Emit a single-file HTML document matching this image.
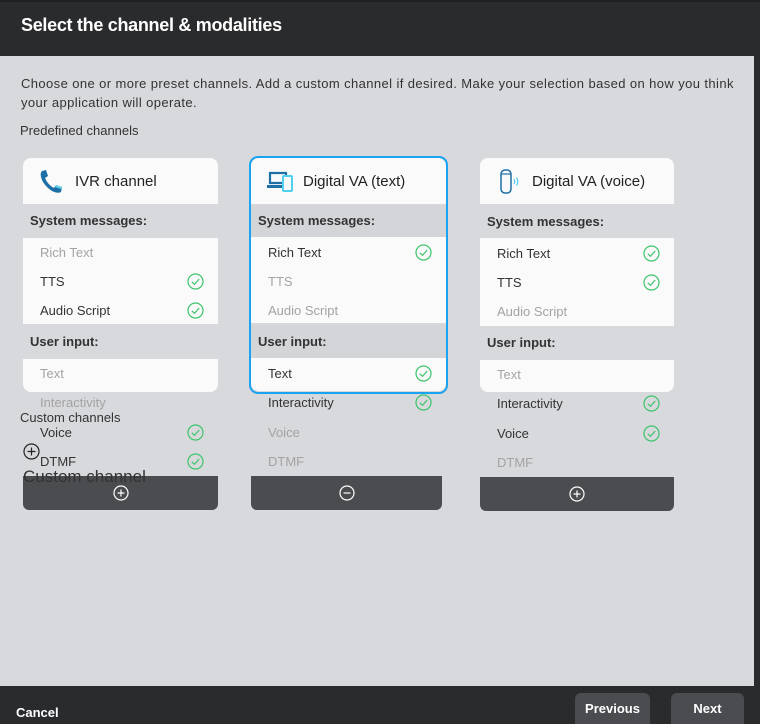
<!DOCTYPE html>
<html><head><meta charset="utf-8"><style>
*{margin:0;padding:0;box-sizing:border-box}
body{width:760px;height:724px;background:#2a2b2d;font-family:"Liberation Sans",sans-serif;position:relative;overflow:hidden}
.a{position:absolute}
.hdr{left:0;top:0;width:760px;height:56px;background:#2a2b2d;border-top:2px solid #1e1f21}
.title{left:21px;top:15px;color:#fff;font-size:18px;font-weight:bold;letter-spacing:-0.3px}
.body{left:0;top:56px;width:754px;height:630px;background:#d8d9dd}
.desc{left:21px;top:74px;width:730px;font-size:13px;line-height:19px;color:#333;white-space:nowrap;letter-spacing:0.4px}
.t{font-size:13px;color:#333;line-height:16px}
.card{position:absolute;top:158px}
.card .h{position:absolute;left:0;top:0;height:46px;width:100%;background:#fafafa;border-radius:8px 8px 0 0}
.card .h span{position:absolute;left:52px;top:15px;font-size:15px;color:#222;font-weight:500}
.card .w1{position:absolute;left:0;top:80px;height:86px;width:100%;background:#fafafa}
.card .w2{position:absolute;left:0;top:201px;height:33px;width:100%;background:#fafafa;border-radius:0 0 8px 8px}
.lab{position:absolute;left:7px;font-size:13px;font-weight:bold;color:#333;margin-top:1px}
.row{position:absolute;left:17px;font-size:13px;color:#333;margin-top:1px}
.row.off{color:#a3a3a3}
.ck{position:absolute;right:14px;width:17px;height:17px}
.btn{position:absolute;left:0;top:318px;height:34px;width:100%;background:#4a4c50;border-radius:0 0 6px 6px}
.btn svg{position:absolute;left:50%;top:9px;margin-left:-8px}
.foot{color:#fff;font-size:13px;font-weight:bold}
.fb{background:#4a4c50;border-radius:6px 6px 0 0;color:#fff;font-size:13px;font-weight:bold;text-align:center}
</style></head><body>
<div class="a hdr"></div>
<div class="a title">Select the channel &amp; modalities</div>
<div class="a body"></div>
<div class="a desc">Choose one or more preset channels. Add a custom channel if desired. Make your selection based on how you think<br>your application will operate.</div>
<div class="a t" style="left:20px;top:123px">Predefined channels</div>

<!-- IVR -->
<div class="card" style="left:23px;width:195px;height:360px">
<div class="h"><svg class="a" style="left:14px;top:10px" width="28" height="28" viewBox="0 0 28 28"><path d="M5 3 L9 2 L11 8 L8 10 Q11 17 17 20 L19 17 L25 19 L24 24 Q21 26 15 23 Q6 17 4 9 Q3 5 5 3Z" fill="#1d6fa6"/><path d="M19 17 L25 19 L24 21 L18 19Z" fill="#5fd3f0"/></svg><span>IVR channel</span></div>
<div class="lab" style="top:54px">System messages:</div>
<div class="w1"></div>
<div class="row off" style="top:86px">Rich Text</div>
<div class="row" style="top:115px">TTS</div>
<svg class="ck" style="top:115px" viewBox="0 0 17 17"><circle cx="8.5" cy="8.5" r="7.5" fill="none" stroke="#3cc46a" stroke-width="1.2"/><path d="M4.8 8.8 L7.5 11.3 L12.2 6" fill="none" stroke="#3cc46a" stroke-width="1.2"/></svg>
<div class="row" style="top:144px">Audio Script</div>
<svg class="ck" style="top:144px" viewBox="0 0 17 17"><circle cx="8.5" cy="8.5" r="7.5" fill="none" stroke="#3cc46a" stroke-width="1.2"/><path d="M4.8 8.8 L7.5 11.3 L12.2 6" fill="none" stroke="#3cc46a" stroke-width="1.2"/></svg>
<div class="lab" style="top:175px">User input:</div>
<div class="w2"></div>
<div class="row off" style="top:207px">Text</div>
<div class="row off" style="top:236px">Interactivity</div>
<div class="row" style="top:266px">Voice</div>
<svg class="ck" style="top:266px" viewBox="0 0 17 17"><circle cx="8.5" cy="8.5" r="7.5" fill="none" stroke="#3cc46a" stroke-width="1.2"/><path d="M4.8 8.8 L7.5 11.3 L12.2 6" fill="none" stroke="#3cc46a" stroke-width="1.2"/></svg>
<div class="row" style="top:295px">DTMF</div>
<svg class="ck" style="top:295px" viewBox="0 0 17 17"><circle cx="8.5" cy="8.5" r="7.5" fill="none" stroke="#3cc46a" stroke-width="1.2"/><path d="M4.8 8.8 L7.5 11.3 L12.2 6" fill="none" stroke="#3cc46a" stroke-width="1.2"/></svg>
<div class="btn"><svg width="16" height="16" viewBox="0 0 16 16"><circle cx="8" cy="8" r="7" fill="none" stroke="#fff" stroke-width="1.2"/><path d="M4.5 8H11.5M8 4.5V11.5" stroke="#fff" stroke-width="1.2"/></svg></div>
</div>
<div class="a t" style="left:20px;top:410px">Custom channels</div>
<svg class="a" style="left:23px;top:443px" width="17" height="17" viewBox="0 0 17 17"><circle cx="8.5" cy="8.5" r="7.5" fill="none" stroke="#222" stroke-width="1.2"/><path d="M4.5 8.5H12.5M8.5 4.5V12.5" stroke="#222" stroke-width="1.2"/></svg>
<div class="a" style="left:23px;top:467px;font-size:17px;color:#333">Custom channel</div>

<!-- Digital text -->
<div class="a" style="left:249px;top:156px;width:199px;height:238px;border:2px solid #1aa3f0;border-radius:9px;z-index:2"></div>
<div class="card" style="left:251px;width:195px;height:360px">
<div class="h"><svg class="a" style="left:16px;top:12px" width="28" height="24" viewBox="0 0 28 24"><path d="M3 3H19V13H3Z" fill="none" stroke="#1d6fa6" stroke-width="2.2"/><path d="M0 15H17V18H0Z" fill="#1d6fa6"/><rect x="16" y="6" width="9" height="15" rx="1" fill="#fafafa" stroke="#4fd0ee" stroke-width="2"/></svg><span>Digital VA (text)</span></div>
<div class="a" style="left:0;top:47px;width:195px;height:33px;background:#d4d5d9"></div>
<div class="lab" style="top:54px">System messages:</div>
<div class="w1" style="top:79px"></div>
<div class="row" style="top:86px">Rich Text</div>
<svg class="ck" style="top:86px" viewBox="0 0 17 17"><circle cx="8.5" cy="8.5" r="7.5" fill="none" stroke="#3cc46a" stroke-width="1.2"/><path d="M4.8 8.8 L7.5 11.3 L12.2 6" fill="none" stroke="#3cc46a" stroke-width="1.2"/></svg>
<div class="row off" style="top:115px">TTS</div>
<div class="row off" style="top:144px">Audio Script</div>
<div class="a" style="left:0;top:167px;width:195px;height:33px;background:#d4d5d9"></div>
<div class="lab" style="top:175px">User input:</div>
<div class="w2" style="top:200px"></div>
<div class="row" style="top:207px">Text</div>
<svg class="ck" style="top:207px" viewBox="0 0 17 17"><circle cx="8.5" cy="8.5" r="7.5" fill="none" stroke="#3cc46a" stroke-width="1.2"/><path d="M4.8 8.8 L7.5 11.3 L12.2 6" fill="none" stroke="#3cc46a" stroke-width="1.2"/></svg>
<div class="row" style="top:236px">Interactivity</div>
<svg class="ck" style="top:236px" viewBox="0 0 17 17"><circle cx="8.5" cy="8.5" r="7.5" fill="none" stroke="#3cc46a" stroke-width="1.2"/><path d="M4.8 8.8 L7.5 11.3 L12.2 6" fill="none" stroke="#3cc46a" stroke-width="1.2"/></svg>
<div class="row off" style="top:266px">Voice</div>
<div class="row off" style="top:295px">DTMF</div>
<div class="btn" style="width:191px"><svg width="16" height="16" viewBox="0 0 16 16"><circle cx="8" cy="8" r="7" fill="none" stroke="#fff" stroke-width="1.2"/><path d="M4.5 8H11.5" stroke="#fff" stroke-width="1.2"/></svg></div>
</div>

<!-- Digital voice -->
<div class="card" style="left:480px;width:194px;height:360px">
<div class="h"><svg class="a" style="left:18px;top:10px" width="24" height="28" viewBox="0 0 24 28"><rect x="3" y="2" width="10" height="23" rx="4" fill="none" stroke="#1d6fa6" stroke-width="1.5"/><path d="M3 6H13" stroke="#1d6fa6" stroke-width="1.2"/><path d="M16 11Q17.5 13.5 16 16M18.5 9.5Q21 13.5 18.5 17.5" fill="none" stroke="#4fd0ee" stroke-width="1.2"/></svg><span>Digital VA (voice)</span></div>
<div class="lab" style="top:55px">System messages:</div>
<div class="w1" style="height:88px"></div>
<div class="row" style="top:87px">Rich Text</div>
<svg class="ck" style="top:87px" viewBox="0 0 17 17"><circle cx="8.5" cy="8.5" r="7.5" fill="none" stroke="#3cc46a" stroke-width="1.2"/><path d="M4.8 8.8 L7.5 11.3 L12.2 6" fill="none" stroke="#3cc46a" stroke-width="1.2"/></svg>
<div class="row" style="top:116px">TTS</div>
<svg class="ck" style="top:116px" viewBox="0 0 17 17"><circle cx="8.5" cy="8.5" r="7.5" fill="none" stroke="#3cc46a" stroke-width="1.2"/><path d="M4.8 8.8 L7.5 11.3 L12.2 6" fill="none" stroke="#3cc46a" stroke-width="1.2"/></svg>
<div class="row off" style="top:145px">Audio Script</div>
<div class="lab" style="top:176px">User input:</div>
<div class="w2" style="top:202px;height:32px"></div>
<div class="row off" style="top:208px">Text</div>
<div class="row" style="top:237px">Interactivity</div>
<svg class="ck" style="top:237px" viewBox="0 0 17 17"><circle cx="8.5" cy="8.5" r="7.5" fill="none" stroke="#3cc46a" stroke-width="1.2"/><path d="M4.8 8.8 L7.5 11.3 L12.2 6" fill="none" stroke="#3cc46a" stroke-width="1.2"/></svg>
<div class="row" style="top:267px">Voice</div>
<svg class="ck" style="top:267px" viewBox="0 0 17 17"><circle cx="8.5" cy="8.5" r="7.5" fill="none" stroke="#3cc46a" stroke-width="1.2"/><path d="M4.8 8.8 L7.5 11.3 L12.2 6" fill="none" stroke="#3cc46a" stroke-width="1.2"/></svg>
<div class="row off" style="top:296px">DTMF</div>
<div class="btn" style="top:319px"><svg width="16" height="16" viewBox="0 0 16 16"><circle cx="8" cy="8" r="7" fill="none" stroke="#fff" stroke-width="1.2"/><path d="M4.5 8H11.5M8 4.5V11.5" stroke="#fff" stroke-width="1.2"/></svg></div>
</div>

<!-- footer -->
<div class="a foot" style="left:16px;top:705px">Cancel</div>
<div class="a fb" style="left:575px;top:693px;width:75px;height:31px;line-height:31px">Previous</div>
<div class="a fb" style="left:671px;top:693px;width:73px;height:31px;line-height:31px">Next</div>
</body></html>
